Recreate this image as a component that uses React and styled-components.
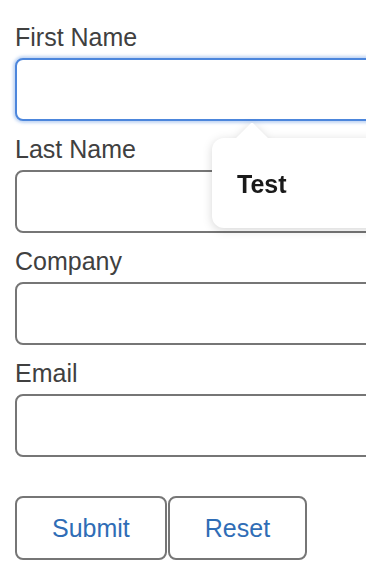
import React from "react";
import styled, { createGlobalStyle } from "styled-components";

const Global = createGlobalStyle`
  html, body { margin: 0; padding: 0; background: #fff; overflow: hidden; }
  body { font-family: "Liberation Sans", Arial, sans-serif; }
`;

const Form = styled.form`
  padding: 23px 0 0 15px;
  width: 420px;
`;

const Field = styled.div`
  position: relative;
  display: flex;
  flex-direction: column;
  margin-bottom: 14px;
`;

const Label = styled.label`
  font-size: 25px;
  line-height: 28px;
  color: #404040;
  margin-bottom: 7px;
`;

const Input = styled.input`
  box-sizing: border-box;
  width: 420px;
  height: 63px;
  border: 2px solid ${(p) => (p.$focused ? "#4c86dc" : "#767676")};
  border-radius: 8px;
  background: #fff;
  font-size: 24px;
  font-family: inherit;
  padding: 0 12px;
  outline: none;
  box-shadow: ${(p) => (p.$focused ? "0 0 3px 2px rgba(76,134,220,0.35)" : "none")};
`;

const TooltipWrap = styled.div`
  position: absolute;
  left: 197px;
  top: 99px;
  filter: drop-shadow(0 2px 5px rgba(0, 0, 0, 0.16));
  z-index: 2;
`;

const Arrow = styled.div`
  position: absolute;
  left: 28px;
  top: 5px;
  width: 24px;
  height: 24px;
  background: #fff;
  transform: rotate(45deg);
  border-radius: 3px 0 0 0;
`;

const Tooltip = styled.div`
  position: relative;
  margin-top: 16px;
  width: 220px;
  height: 90px;
  box-sizing: border-box;
  background: #fff;
  border-radius: 12px;
  padding: 32px 0 0 25px;
  font-size: 25px;
  line-height: 28px;
  font-weight: 700;
  color: #1a1a1a;
`;

const Buttons = styled.div`
  display: flex;
  gap: 1px;
  margin-top: 39px;
`;

const Button = styled.button`
  box-sizing: border-box;
  height: 64px;
  padding: 0 35px;
  border: 2px solid #767676;
  border-radius: 8px;
  background: #fff;
  color: #2f6db6;
  font-family: "Liberation Sans", Arial, sans-serif;
  font-size: 25px;
  cursor: pointer;
`;

export default function App() {
  return (
    <>
      <Global />
      <Form onSubmit={(e) => e.preventDefault()}>
        <Field>
          <Label>First Name</Label>
          <Input $focused />
          <TooltipWrap>
            <Arrow />
            <Tooltip>Test</Tooltip>
          </TooltipWrap>
        </Field>
        <Field>
          <Label>Last Name</Label>
          <Input />
        </Field>
        <Field>
          <Label>Company</Label>
          <Input />
        </Field>
        <Field>
          <Label>Email</Label>
          <Input />
        </Field>
        <Buttons>
          <Button type="submit">Submit</Button>
          <Button type="reset">Reset</Button>
        </Buttons>
      </Form>
    </>
  );
}
